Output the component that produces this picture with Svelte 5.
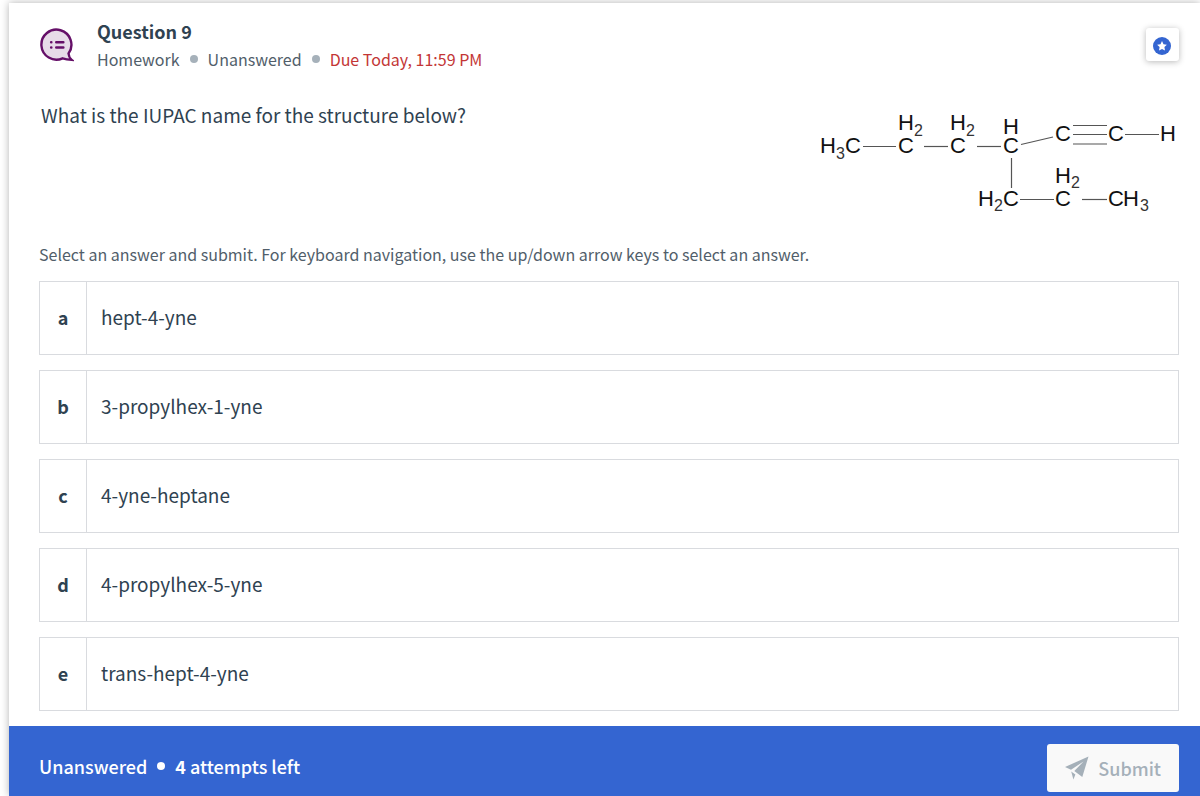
<script lang="ts">
	const choices = [
		{ key: 'a', text: 'hept-4-yne' },
		{ key: 'b', text: '3-propylhex-1-yne' },
		{ key: 'c', text: '4-yne-heptane' },
		{ key: 'd', text: '4-propylhex-5-yne' },
		{ key: 'e', text: 'trans-hept-4-yne' }
	];

	// atom labels: x, baseline, text
	const atoms: [number, number, string][] = [
		[0, 43, 'H'],
		[25, 43, 'C'],
		[78, 20, 'H'],
		[78, 43, 'C'],
		[130, 20, 'H'],
		[130, 43, 'C'],
		[183, 24, 'H'],
		[183, 43, 'C'],
		[235, 31, 'C'],
		[288, 31, 'C'],
		[340, 31, 'H'],
		[158, 96, 'H'],
		[183, 96, 'C'],
		[235, 73, 'H'],
		[235, 96, 'C'],
		[288, 96, 'C'],
		[303, 96, 'H']
	];

	const subs: [number, number, string][] = [
		[16, 49, '3'],
		[94, 26, '2'],
		[146, 26, '2'],
		[174, 101, '2'],
		[251, 78, '2'],
		[320, 101, '3']
	];

	const bonds = [
		[43, 36.5, 76, 36.5],
		[104, 36.5, 128, 36.5],
		[157, 36.5, 181, 36.5],
		[201, 34.5, 233, 27],
		[253, 15.5, 287, 15.5],
		[253, 24.5, 287, 24.5],
		[253, 34, 287, 34],
		[305, 24.5, 339, 24.5],
		[191.5, 48, 191.5, 78],
		[200, 89.5, 234, 89.5],
		[262, 89.5, 287, 89.5]
	];

	let selected = $state('');
</script>

<main class="card">
	<header>
		<svg class="type-icon" width="34" height="34" viewBox="0 0 34 34" aria-hidden="true">
			<path
				d="M28.5 25.5A15 15 0 1 0 22.6 30.3C24.8 31 28 31.6 31.6 31.8C29.6 30 28.7 28 28.5 25.5Z"
				fill="#e7dbe8"
				stroke="#650f68"
				stroke-width="2.4"
				stroke-linejoin="miter"
			/>
			<g stroke="#650f68" stroke-width="2.6" stroke-linecap="round">
				<path d="M16.3 14.3h7M16.3 19.5h7" />
				<path d="M11.2 14.3h.1M11.2 19.5h.1" />
			</g>
		</svg>
		<div class="heading">
			<h1>Question 9</h1>
			<p class="meta">
				<span>Homework</span>
				<i class="dot"></i>
				<span>Unanswered</span>
				<i class="dot"></i>
				<span class="due">Due Today, 11:59 PM</span>
			</p>
		</div>
		<button class="star" type="button" aria-label="Bookmark question">
			<svg width="18" height="18" viewBox="0 0 18 18" aria-hidden="true">
				<circle cx="9" cy="9" r="9" fill="#3465d1" />
				<path
					d="M9 4.1l1.5 3.1 3.4.5-2.5 2.4.6 3.4L9 11.9l-3 1.6.6-3.4-2.5-2.4 3.4-.5z"
					fill="#fff"
				/>
			</svg>
		</button>
	</header>

	<section class="prompt">
		<p>What is the IUPAC name for the structure below?</p>
		<svg class="structure" width="360" height="106" viewBox="0 0 360 106" role="img" aria-label="Chemical structure">
			{#each bonds as [x1, y1, x2, y2]}
				<line {x1} {y1} {x2} {y2} />
			{/each}
			{#each atoms as [x, y, label]}
				<text {x} {y}>{label}</text>
			{/each}
			{#each subs as [x, y, label]}
				<text class="sub" {x} {y}>{label}</text>
			{/each}
		</svg>
	</section>

	<fieldset>
		<legend>Select an answer and submit. For keyboard navigation, use the up/down arrow keys to select an answer.</legend>
		<div class="choices">
			{#each choices as choice}
				<label class="choice" class:selected={selected === choice.key}>
					<input type="radio" name="answer" value={choice.key} bind:group={selected} />
					<span class="letter">{choice.key}</span>
					<span class="answer">{choice.text}</span>
				</label>
			{/each}
		</div>
	</fieldset>

	<footer>
		<p class="status">
			<span>Unanswered</span>
			<i class="dot"></i>
			<span><b>4</b> attempts left</span>
		</p>
		<button class="submit" type="button" disabled={!selected}>
			<svg width="24" height="24" viewBox="0 0 24 24" aria-hidden="true">
				<path d="M23.5.5L0 11l6 2.7L18.5 5.5 9.3 15.1 17.3 21z" />
				<path d="M6.2 15.5l4.2 3.1-2 4.9z" />
			</svg>
			Submit
		</button>
	</footer>
</main>

<style>
	:global(body) {
		margin: 0;
		background: #fff;
	}

	.card {
		display: flex;
		flex-direction: column;
		box-sizing: border-box;
		min-height: calc(100vh - 3px);
		margin: 3px 0 0 9px;
		background: #fff;
		box-shadow: 0 0 8px rgba(0, 0, 0, 0.3);
		color: #2f4251;
		font-family: 'Noto Sans CJK SC', 'Open Sans', sans-serif;
		font-size: 18px;
		line-height: 28px;
	}

	h1,
	p {
		margin: 0;
	}

	header {
		display: flex;
		align-items: flex-start;
		padding: 14px 21px 0 31px;
	}

	.type-icon {
		flex: none;
		margin-top: 11px;
	}

	.heading {
		flex: 1;
		margin-left: 23px;
	}

	h1 {
		font-size: 18px;
		font-weight: 700;
		line-height: 28px;
	}

	.meta {
		display: flex;
		align-items: center;
		color: #515e6a;
		font-size: 16px;
	}

	.dot {
		width: 8px;
		height: 8px;
		margin: 0 10px;
		border-radius: 50%;
		background: #a6b1ba;
	}

	.due {
		color: #c33636;
	}

	.star {
		display: flex;
		align-items: center;
		justify-content: center;
		width: 33px;
		height: 33px;
		margin-top: 11px;
		padding: 2px 1px 0 0;
		border: 0;
		border-radius: 3px;
		background: #fff;
		box-shadow: 0 1px 6px rgba(0, 0, 0, 0.28);
		cursor: pointer;
	}

	.prompt {
		display: flex;
		align-items: flex-start;
		justify-content: space-between;
		padding: 28px 20px 0 32px;
		font-size: 19px;
	}

	.structure {
		flex: none;
		margin-top: 9px;
	}

	.structure line {
		stroke: #555;
		stroke-width: 1.2;
	}

	.structure text {
		fill: #111;
		font-family: 'Liberation Sans', Arial, sans-serif;
		font-size: 22px;
	}

	.structure .sub {
		fill: #333;
		font-size: 16px;
	}

	fieldset {
		min-width: 0;
		margin: 0;
		padding: 24px 21px 15px 30px;
		border: 0;
	}

	legend {
		float: left;
		padding: 0;
		color: #515e6a;
		font-size: 16px;
	}

	.choices {
		display: flex;
		flex-direction: column;
		gap: 15px;
		clear: both;
		padding-top: 13px;
	}

	.choice {
		display: flex;
		position: relative;
		box-sizing: border-box;
		min-height: 74px;
		border: 1px solid #d9dbdf;
		cursor: pointer;
	}

	.choice input {
		appearance: none;
		position: absolute;
		inset: 0;
		margin: 0;
		cursor: pointer;
	}

	.choice.selected {
		border-color: #3465d1;
	}

	.letter,
	.answer {
		display: flex;
		align-items: center;
		padding: 0 14px 2px;
	}

	.letter {
		box-sizing: border-box;
		justify-content: center;
		width: 47px;
		border-right: 1px solid #d9dbdf;
		font-weight: 700;
	}

	.answer {
		font-size: 19px;
	}

	footer {
		display: flex;
		flex: 1;
		align-items: flex-start;
		justify-content: space-between;
		padding: 18px 21px 4px 30px;
		background: #3465d1;
		color: #fff;
	}

	.status {
		display: flex;
		align-items: center;
		margin-top: 8px;
		font-weight: 500;
	}

	.status .dot {
		background: #fff;
	}

	.submit {
		display: flex;
		align-items: center;
		justify-content: center;
		gap: 9px;
		height: 48px;
		padding: 0 18px;
		border: 0;
		border-radius: 3px;
		background: #f9f9f9;
		color: #a5b0b9;
		font: inherit;
		font-weight: 500;
	}

	.submit svg {
		fill: currentColor;
	}
</style>
